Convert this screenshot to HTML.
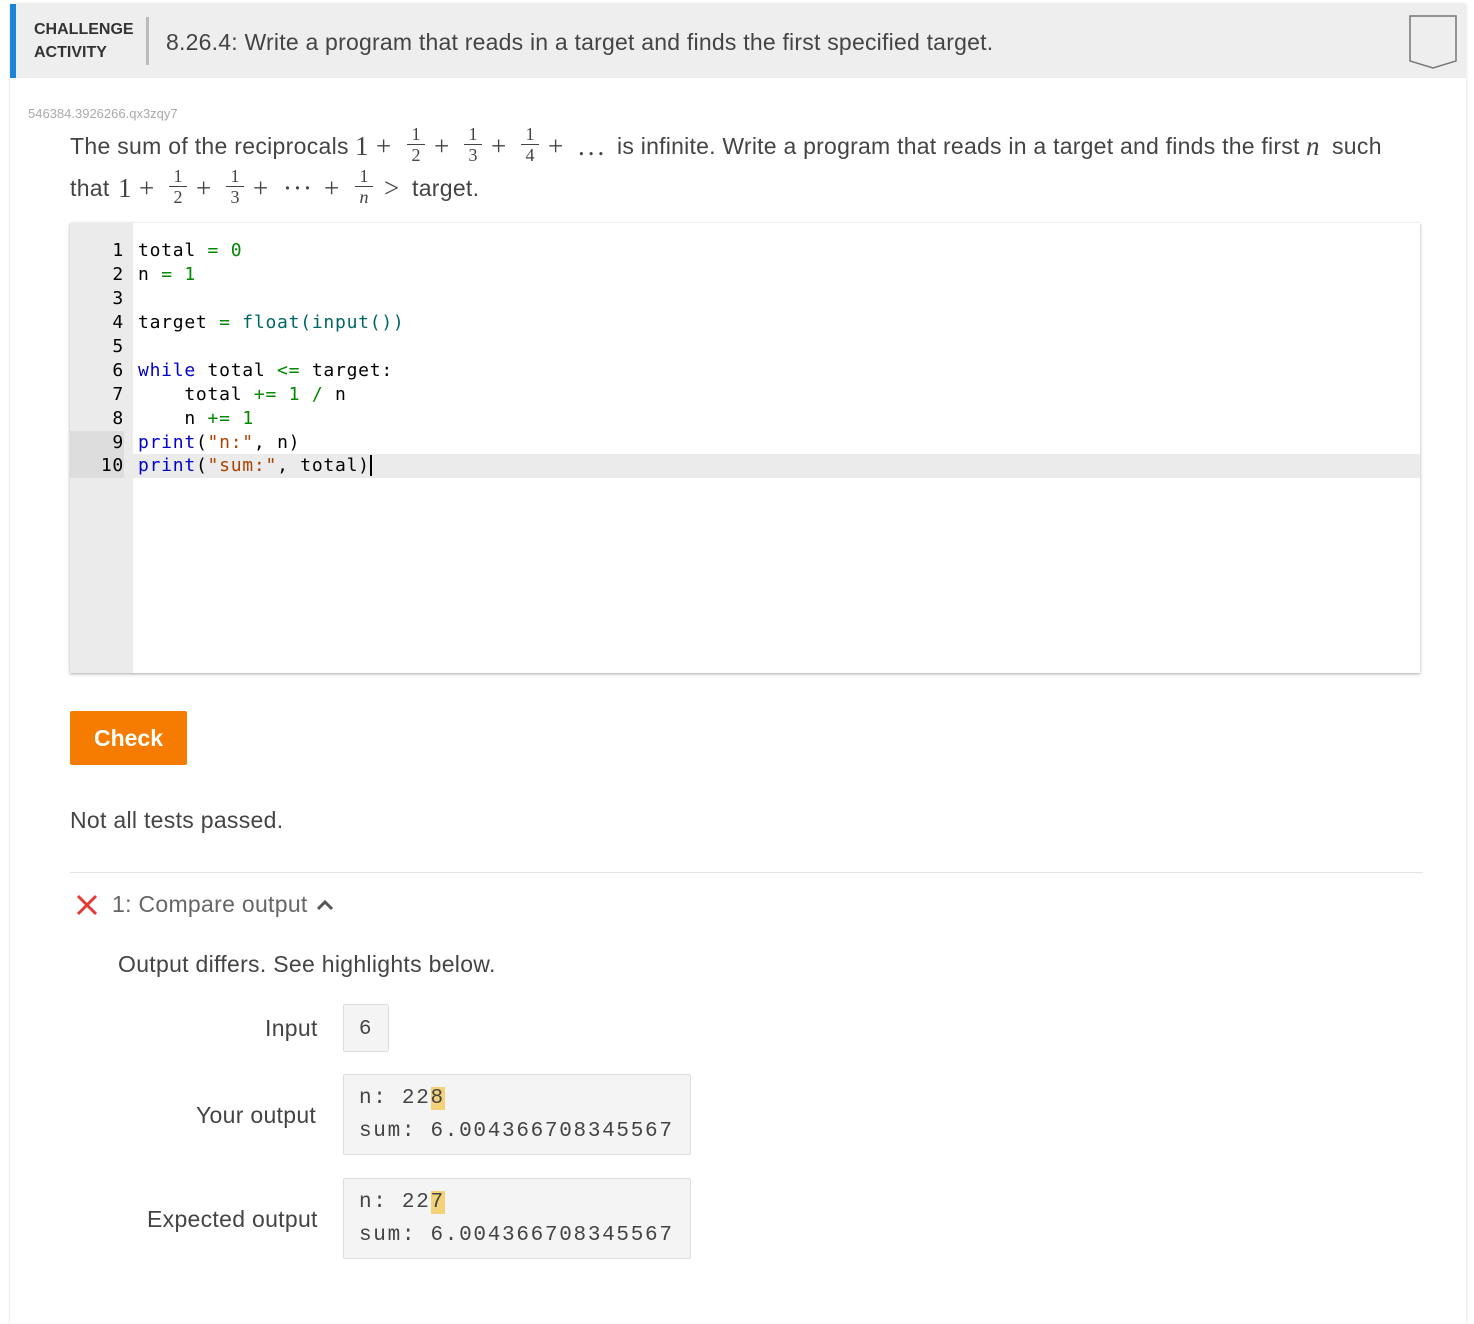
<!DOCTYPE html>
<html><head><meta charset="utf-8"><style>
body{margin:0;background:#fff;font-family:"Liberation Sans",sans-serif;width:1474px;height:1305px;overflow:hidden;position:relative}
.card{position:absolute;left:10px;top:4px;width:1456px;height:1320px;background:#fff;box-shadow:0 0 3px rgba(0,0,0,.15)}
.hdr{position:absolute;left:0;top:0;width:1456px;height:74px;background:#eeeeee;border-left:6px solid #1a84d6;box-sizing:border-box}
.ca{position:absolute;left:18px;top:14px;font-weight:bold;font-size:16px;line-height:23px;color:#333}
.sep{position:absolute;left:130px;top:13px;width:3px;height:48px;background:#bbb}
.ttl{position:absolute;left:150px;top:25px;font-size:23px;color:#444;letter-spacing:.22px}
.bm{position:absolute;left:1392px;top:10px}
.id{position:absolute;left:28px;top:106px;font-size:13px;color:#aaa}
.a{position:absolute;font-size:23px;line-height:26px;color:#444;white-space:nowrap;letter-spacing:.3px}
.m{position:absolute;font-family:"Liberation Serif",serif;font-size:27px;line-height:26px;color:#444;white-space:nowrap}
.f{position:absolute;width:24px;text-align:center;font-family:"Liberation Serif",serif;font-size:18px;line-height:18px;color:#444}
.f .nu{display:block;border-bottom:1.5px solid #444;padding-bottom:1px;margin:0 3px}
.f .de{display:block;padding-top:1px}
.ed{position:absolute;left:70px;top:223px;width:1350px;height:450px;background:#fff;box-shadow:0 1px 3px rgba(0,0,0,.35)}
.gut{position:absolute;left:0;top:0;width:63px;height:450px;background:#ebebeb}
.gtop{position:absolute;left:63px;top:0;width:1287px;height:13px;background:#fff}
.ln{position:absolute;left:0;width:1350px;height:24px;font-family:"DejaVu Sans Mono",monospace;font-size:18px;line-height:24px;letter-spacing:.75px;white-space:pre;color:#000}
.ln .n{display:inline-block;width:54px;text-align:right;margin-right:14px;color:#000}
.k{color:#00c}.g{color:#080}.b{color:#066}.s{color:#a40}
.check{position:absolute;left:70px;top:711px;width:117px;height:54px;background:#f57c00;color:#fff;font-weight:bold;font-size:23px;line-height:54px;text-align:center;border-radius:2px}
.t{position:absolute;font-size:23px;color:#444;white-space:nowrap;letter-spacing:.3px}
.box{position:absolute;left:343px;background:#f4f4f4;border:1px solid #ddd;border-radius:2px;font-family:"Liberation Mono",monospace;font-size:21px;color:#444;letter-spacing:1.7px;white-space:pre;line-height:33px;padding:7px 15px;box-sizing:border-box}
.hl{background:#f3d27a}
</style></head><body>
<div class="card">
<div class="hdr">
<div class="ca">CHALLENGE<br>ACTIVITY</div>
<div class="sep"></div>
<div class="ttl">8.26.4: Write a program that reads in a target and finds the first specified target.</div>
<svg class="bm" width="50" height="58" viewBox="0 0 50 58"><path d="M2 2H48V47L25 54L2 47Z" fill="none" stroke="#777" stroke-width="1.5"/></svg>
</div>
</div>
<div class="id">546384.3926266.qx3zqy7</div>

<div class="a" style="left:70px;top:133px">The sum of the reciprocals</div>
<div class="m" style="left:355px;top:133px">1</div>
<div class="m" style="left:376px;top:133px">+</div>
<div class="f" style="left:404px;top:125px"><span class="nu">1</span><span class="de">2</span></div>
<div class="m" style="left:434px;top:133px">+</div>
<div class="f" style="left:461px;top:125px"><span class="nu">1</span><span class="de">3</span></div>
<div class="m" style="left:491px;top:133px">+</div>
<div class="f" style="left:518px;top:125px"><span class="nu">1</span><span class="de">4</span></div>
<div class="m" style="left:548px;top:133px">+</div>
<div class="m" style="left:578px;top:133px;letter-spacing:3px">...</div>
<div class="a" style="left:617px;top:133px;letter-spacing:.24px">is infinite. Write a program that reads in a target and finds the first</div>
<div class="m" style="left:1306px;top:133px"><i>n</i></div>
<div class="a" style="left:1332px;top:133px">such</div>

<div class="a" style="left:70px;top:175px">that</div>
<div class="m" style="left:118px;top:175px">1</div>
<div class="m" style="left:139px;top:175px">+</div>
<div class="f" style="left:166px;top:167px"><span class="nu">1</span><span class="de">2</span></div>
<div class="m" style="left:196px;top:175px">+</div>
<div class="f" style="left:223px;top:167px"><span class="nu">1</span><span class="de">3</span></div>
<div class="m" style="left:253px;top:175px">+</div>
<div class="m" style="left:283px;top:175px;letter-spacing:1px">···</div>
<div class="m" style="left:324px;top:175px">+</div>
<div class="f" style="left:352px;top:167px"><span class="nu">1</span><span class="de"><i>n</i></span></div>
<div class="m" style="left:384px;top:175px">&gt;</div>
<div class="a" style="left:412px;top:175px">target.</div>

<div class="ed">
<div class="gut"></div><div class="gtop"></div>
<div class="ln" style="top:16px"><span class="n">1</span>total <span class="g">=</span> <span class="g">0</span></div>
<div class="ln" style="top:40px"><span class="n">2</span>n <span class="g">=</span> <span class="g">1</span></div>
<div class="ln" style="top:64px"><span class="n">3</span></div>
<div class="ln" style="top:88px"><span class="n">4</span>target <span class="g">=</span> <span class="b">float(input())</span></div>
<div class="ln" style="top:112px"><span class="n">5</span></div>
<div class="ln" style="top:136px"><span class="n">6</span><span class="k">while</span> total <span class="g">&lt;=</span> target:</div>
<div class="ln" style="top:160px"><span class="n">7</span>    total <span class="g">+=</span> <span class="g">1</span> <span class="g">/</span> n</div>
<div class="ln" style="top:184px"><span class="n">8</span>    n <span class="g">+=</span> <span class="g">1</span></div>
<div class="ln" style="top:208px"><span class="n" style="background:#ddd">9</span><span class="k">print</span>(<span class="s">"n:"</span>, n)</div>
<div class="ln" style="top:231px;background:#ebebeb"><span class="n" style="background:#ddd">10</span><span class="k">print</span>(<span class="s">"sum:"</span>, total)<span style="border-left:2px solid #000"></span></div>
</div>
<div class="check">Check</div>
<div class="t" style="left:70px;top:807px">Not all tests passed.</div>
<div style="position:absolute;left:70px;top:872px;width:1353px;height:1px;background:#e5e5e5"></div>
<svg style="position:absolute;left:76px;top:894px" width="22" height="22" viewBox="0 0 22 22"><path d="M2 2L20 20M20 2L2 20" stroke="#e53935" stroke-width="3"/></svg>
<div class="t" style="left:112px;top:891px;color:#666">1: Compare output</div>
<svg style="position:absolute;left:316px;top:898px" width="18" height="14" viewBox="0 0 18 14"><path d="M2 11L9 4L16 11" fill="none" stroke="#555" stroke-width="3"/></svg>
<div class="t" style="left:118px;top:951px">Output differs. See highlights below.</div>
<div class="t" style="left:265px;top:1015px">Input</div>
<div class="box" style="top:1004px;width:46px;height:48px;padding:8px 0;text-align:center">6</div>
<div class="t" style="left:196px;top:1102px">Your output</div>
<div class="box" style="top:1074px;width:348px;height:81px">n: 22<span class="hl">8</span>
sum: 6.004366708345567</div>
<div class="t" style="left:147px;top:1206px">Expected output</div>
<div class="box" style="top:1178px;width:348px;height:81px">n: 22<span class="hl">7</span>
sum: 6.004366708345567</div>
</body></html>
